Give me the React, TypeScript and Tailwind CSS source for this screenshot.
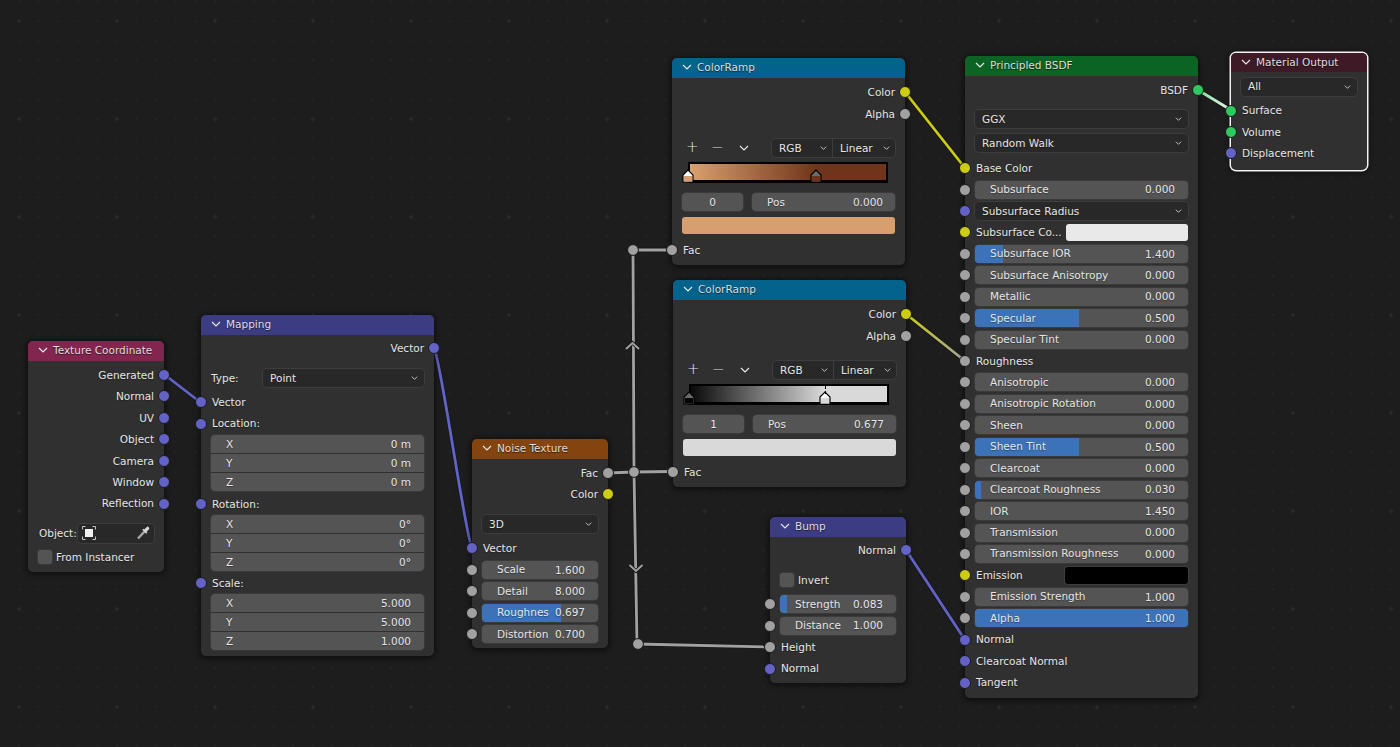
import type { ReactNode } from 'react';

type SocketKind = 'vector' | 'value' | 'color' | 'shader';

const socketColors: Record<SocketKind, string> = {
  vector: 'bg-[#6363c7]',
  value: 'bg-[#a1a1a1]',
  color: 'bg-[#cccc14]',
  shader: 'bg-[#2fc75f]',
};

function Socket({ kind, side }: { kind: SocketKind; side: 'left' | 'right' }) {
  return (
    <span
      className={
        'absolute top-1/2 z-10 h-[12px] w-[12px] -translate-y-1/2 rounded-full border border-[#1a1a1a] ' +
        socketColors[kind] +
        (side === 'left' ? ' -left-[6px]' : ' -right-[6px]')
      }
    />
  );
}

function Chevron({ className }: { className: string }) {
  return (
    <svg viewBox="0 0 10 6" className={className} fill="none" stroke="currentColor" strokeWidth="1.2">
      <path d="M1 1l4 4 4-4" />
    </svg>
  );
}

function Node({
  className,
  header,
  title,
  children,
}: {
  className: string;
  header: string;
  title: string;
  children: ReactNode;
}) {
  return (
    <div className={'absolute rounded-[5px] bg-[#303030] shadow-[0_1px_5px_2px_rgba(0,0,0,0.45)] ' + className}>
      <div className={'flex h-[19.5px] items-center rounded-t-[5px] pb-px pl-[10px] ' + header}>
        <Chevron className="h-[6px] w-[10px] text-[#e6e6e6]" />
        <span className="ml-[5px] text-[#dedede] [text-shadow:0_1px_1px_rgba(0,0,0,0.6)]">{title}</span>
      </div>
      {children}
    </div>
  );
}

function Row({ kind, side = 'left', children }: { kind?: SocketKind; side?: 'left' | 'right'; children: ReactNode }) {
  return (
    <div className="relative flex h-[21.45px] items-center px-[10px]">
      {kind && <Socket kind={kind} side={side} />}
      {children}
    </div>
  );
}

function Output({ label, kind }: { label: string; kind: SocketKind }) {
  return (
    <Row kind={kind} side="right">
      <span className="ml-auto">{label}</span>
    </Row>
  );
}

function Input({ label, kind }: { label: string; kind: SocketKind }) {
  return (
    <Row kind={kind}>
      <span className="ml-px">{label}</span>
    </Row>
  );
}

function Field({ label, value, fill = 0, kind }: { label: string; value: string; fill?: number; kind?: SocketKind }) {
  return (
    <Row kind={kind ?? 'value'}>
      <FieldBox label={label} value={value} fill={fill} />
    </Row>
  );
}

function FieldBox({ label, value, fill = 0 }: { label: string; value: string; fill?: number }) {
  return (
    <div className="relative flex h-[18px] w-full items-center justify-between overflow-hidden rounded-[4px] bg-[#545454] pl-[15px] pr-[13px] shadow-[0_0_0_1px_#3a3a3a]">
      {fill > 0 && <span className="absolute inset-y-0 left-0 bg-[#3b72b8]" style={{ width: `${fill}%` }} />}
      <span className="relative truncate leading-[15px]">{label}</span>
      <span className="relative ml-1 shrink-0">{value}</span>
    </div>
  );
}

function Select({ value }: { value: string }) {
  return (
    <div className="flex h-[18px] w-full items-center justify-between rounded-[4px] bg-[#282828] pl-[7px] pr-[6px] shadow-[0_0_0_1px_#3d3d3d]">
      <span>{value}</span>
      <Chevron className="h-[4px] w-[7px] text-[#e6e6e6]" />
    </div>
  );
}

function XYZ({ rows }: { rows: [string, string][] }) {
  return (
    <div className="mx-[10px] flex h-[56px] flex-col gap-px overflow-hidden rounded-[4px] shadow-[0_0_0_1px_#3a3a3a]">
      {rows.map(([axis, value]) => (
        <div key={axis} className="flex flex-1 items-center justify-between bg-[#545454] pl-[15px] pr-[13px]">
          <span>{axis}</span>
          <span>{value}</span>
        </div>
      ))}
    </div>
  );
}

function Handle({ fill, active }: { fill: string; active?: boolean }) {
  return (
    <svg viewBox="0 0 12 14" className="h-[14px] w-[12px]">
      <path d="M1 13V6l5-5 5 5v7z" fill={active ? '#ffffff' : '#6b6b6b'} stroke="#000" strokeWidth="1.2" />
      <rect x="2" y="7" width="8" height="5.4" fill={fill} />
    </svg>
  );
}

function ObjectIcon() {
  return (
    <svg viewBox="0 0 14 14" className="h-[14px] w-[14px]" fill="none">
      <path d="M.5 3.500v-3h3M10.500.5h3v3M13.500 10.500v3h-3M3.500 13.500h-3v-3" stroke="#c4c4c4" />
      <rect x="3" y="3" width="8" height="8" fill="#f0f0f0" />
    </svg>
  );
}

function Eyedropper() {
  return (
    <svg viewBox="0 0 14 14" className="h-[14px] w-[14px]" fill="none">
      <path d="M2 12.500L8.500 5.500" stroke="#a8a8a8" strokeWidth="2.400" />
      <path d="M6.800 3.200l4 4" stroke="#d4d4d4" strokeWidth="1.600" />
      <path d="M9.500 4.500l2.200-2.200" stroke="#d4d4d4" strokeWidth="3.200" strokeLinecap="round" />
    </svg>
  );
}

function Ramp({
  bar,
  swatch,
  index,
  pos,
  first,
  second,
  secondLeft,
  tick,
}: {
  bar: string;
  swatch: string;
  index: string;
  pos: string;
  first: ReactNode;
  second: ReactNode;
  secondLeft: string;
  tick?: boolean;
}) {
  return (
    <>
      <div className="h-[12.600px]" />
      <div className="flex h-[21.45px] items-center px-[10px]">
        <span className="ml-[4px] w-[25px] text-[15px] font-light leading-none">+</span>
        <span className="w-[25px] text-[15px] font-light leading-none">−</span>
        <Chevron className="ml-[3px] h-[6px] w-[10px] text-[#e6e6e6]" />
        <div className="ml-auto flex h-[18px] w-[123px] rounded-[4px] bg-[#282828] shadow-[0_0_0_1px_#3d3d3d]">
          <div className="flex w-[61px] items-center justify-between border-r border-[#3d3d3d] pl-[7px] pr-[5px]">
            <span>RGB</span>
            <Chevron className="h-[4px] w-[7px] text-[#e6e6e6]" />
          </div>
          <div className="flex flex-1 items-center justify-between pl-[7px] pr-[5px]">
            <span>Linear</span>
            <Chevron className="h-[4px] w-[7px] text-[#e6e6e6]" />
          </div>
        </div>
      </div>
      <div className="h-[3.300px]" />
      <div className={'relative ml-[16px] h-[21px] w-[200px] border-2 border-b-[3px] border-black ' + bar}>
        <span className="absolute -bottom-[3px] -left-[8px]">{first}</span>
        <span className={'absolute -bottom-[3px] ' + secondLeft}>{second}</span>
        {tick && <span className="absolute left-[134px] top-0 h-[8px] w-0 border-l border-dashed border-black" />}
      </div>
      <div className="h-[10px]" />
      <div className="mx-[10px] flex h-[18px] gap-[9px]">
        <div className="flex w-[61px] items-center justify-center rounded-[4px] bg-[#545454] shadow-[0_0_0_1px_#3a3a3a]">
          {index}
        </div>
        <div className="flex flex-1 items-center justify-between rounded-[4px] bg-[#545454] pl-[15px] pr-[12px] shadow-[0_0_0_1px_#3a3a3a]">
          <span>Pos</span>
          <span>{pos}</span>
        </div>
      </div>
      <div className="h-[6px]" />
      <div className={'mx-[10px] h-[17px] rounded-[3px] ' + swatch} />
      <div className="h-[5.500px]" />
    </>
  );
}

function Wires() {
  const wire = (d: string, stroke: string) => (
    <>
      <path d={d} fill="none" stroke="#161616" strokeWidth="4.400" />
      <path d={d} fill="none" stroke={stroke} strokeWidth="2.800" />
    </>
  );
  const reroute = (cx: number, cy: number) => (
    <circle cx={cx} cy={cy} r="5.400" fill="#a1a1a1" stroke="#1a1a1a" strokeWidth="1" />
  );
  return (
    <svg className="absolute inset-0 h-[747px] w-[1400px]" viewBox="0 0 1400 747">
      <defs>
        <linearGradient id="rough" gradientUnits="userSpaceOnUse" x1="906" y1="314" x2="965" y2="361">
          <stop offset="0" stopColor="#cccc14" />
          <stop offset="1" stopColor="#a1a1a1" />
        </linearGradient>
        <linearGradient id="surf" gradientUnits="userSpaceOnUse" x1="1198" y1="90" x2="1231" y2="110">
          <stop offset="0" stopColor="#7fe09c" />
          <stop offset="1" stopColor="#eef5ee" />
        </linearGradient>
      </defs>
      {wire('M165 375L200 402', '#6363c7')}
      {wire('M434 348C441 360 465 535 472 548', '#6363c7')}
      {wire('M608 473L634 472L672 471.5', '#a1a1a1')}
      {wire('M633 250L671 250', '#a1a1a1')}
      {wire('M634 472L633 250', '#a1a1a1')}
      {wire('M634 472L637 644', '#a1a1a1')}
      {wire('M637 644L769 647', '#a1a1a1')}
      {wire('M905 92L965 168', '#cccc14')}
      {wire('M906 314L965 361', 'url(#rough)')}
      {wire('M906 550L965 640', '#6363c7')}
      {wire('M1198 90L1231 110', 'url(#surf)')}
      <path d="M626 349l6.500-6 6.500 6" fill="none" stroke="#161616" strokeWidth="3.600" />
      <path d="M626 349l6.500-6 6.500 6" fill="none" stroke="#a1a1a1" strokeWidth="2" />
      <path d="M629.500 565l6.500 6 6.500-6" fill="none" stroke="#161616" strokeWidth="3.600" />
      <path d="M629.500 565l6.500 6 6.500-6" fill="none" stroke="#a1a1a1" strokeWidth="2" />
      {reroute(633, 250)}
      {reroute(634, 472)}
      {reroute(638, 644)}
    </svg>
  );
}

export default function App() {
  return (
    <div className="relative h-[747px] w-[1400px] overflow-hidden bg-[#1d1d1d] bg-[image:radial-gradient(circle,#282828_1.6px,transparent_1.8px),radial-gradient(circle,#242424_0.9px,transparent_1.1px)] bg-[size:98px_98px,19.6px_19.6px] bg-[position:68px_70px,9.2px_11.2px] font-['DejaVu_Sans',sans-serif] text-[10.5px] leading-none text-[#e6e6e6] [text-shadow:0_1px_1px_rgba(0,0,0,0.35)]">
      <Wires />

      <Node className="left-[28px] top-[341px] h-[231px] w-[136px]" header="bg-[#83264f]" title="Texture Coordinate">
        <div className="h-[3.800px]" />
        {['Generated', 'Normal', 'UV', 'Object', 'Camera', 'Window', 'Reflection'].map((name) => (
          <Output key={name} label={name} kind="vector" />
        ))}
        <div className="h-[8.500px]" />
        <div className="flex h-[21px] items-center pl-[11px] pr-[10px]">
          <span>Object:</span>
          <div className="ml-auto flex h-[19px] w-[76px] items-center justify-between rounded-[4px] bg-[#282828] px-[4px] shadow-[0_0_0_1px_#3d3d3d]">
            <ObjectIcon />
            <Eyedropper />
          </div>
        </div>
        <div className="mt-[1.500px] flex h-[24px] items-center pl-[10px]">
          <span className="h-[14px] w-[14px] rounded-[3px] bg-[#545454] shadow-[0_0_0_1px_#3a3a3a]" />
          <span className="ml-[4px]">From Instancer</span>
        </div>
      </Node>

      <Node className="left-[201px] top-[315px] h-[341px] w-[233px]" header="bg-[#3c3c83]" title="Mapping">
        <div className="h-[2.800px]" />
        <Output label="Vector" kind="vector" />
        <div className="h-[8.600px]" />
        <Row>
          <span>Type:</span>
          <div className="ml-auto w-[161px]">
            <Select value="Point" />
          </div>
        </Row>
        <div className="h-[2.700px]" />
        <Input label="Vector" kind="vector" />
        <Input label="Location:" kind="vector" />
        <div className="h-[1.100px]" />
        <XYZ rows={[['X', '0 m'], ['Y', '0 m'], ['Z', '0 m']]} />
        <div className="h-[2.300px]" />
        <Input label="Rotation:" kind="vector" />
        <div className="h-[0.300px]" />
        <XYZ rows={[['X', '0°'], ['Y', '0°'], ['Z', '0°']]} />
        <div className="h-[1.300px]" />
        <Input label="Scale:" kind="vector" />
        <div className="h-[0.300px]" />
        <XYZ rows={[['X', '5.000'], ['Y', '5.000'], ['Z', '1.000']]} />
      </Node>

      <Node className="left-[472px] top-[439px] h-[209px] w-[136px]" header="bg-[#83440f]" title="Noise Texture">
        <div className="h-[3.800px]" />
        <Output label="Fac" kind="value" />
        <Output label="Color" kind="color" />
        <div className="h-[8.600px]" />
        <Row>
          <Select value="3D" />
        </Row>
        <div className="h-[2.500px]" />
        <Input label="Vector" kind="vector" />
        <Field label="Scale" value="1.600" />
        <Field label="Detail" value="8.000" />
        <Field label="Roughnes" value="0.697" fill={68} />
        <Field label="Distortion" value="0.700" />
      </Node>

      <Node className="left-[672px] top-[58px] h-[207px] w-[233px]" header="bg-[#03638c]" title="ColorRamp">
        <div className="h-[4.200px]" />
        <Output label="Color" kind="color" />
        <Output label="Alpha" kind="value" />
        <Ramp
          bar="bg-[linear-gradient(to_right,#d9a06f,#6f3419_65%)]"
          swatch="bg-[#d79e6f]"
          index="0"
          pos="0.000"
          first={<Handle fill="#d79e6f" active />}
          second={<Handle fill="#6f3419" />}
          secondLeft="left-[120px]"
        />
        <Input label="Fac" kind="value" />
      </Node>

      <Node className="left-[673px] top-[280px] h-[207px] w-[233px]" header="bg-[#03638c]" title="ColorRamp">
        <div className="h-[4.200px]" />
        <Output label="Color" kind="color" />
        <Output label="Alpha" kind="value" />
        <Ramp
          bar="bg-[linear-gradient(to_right,#0a0a0a,#d9d9d9_68%)]"
          swatch="bg-[#d9d9d9]"
          index="1"
          pos="0.677"
          first={<Handle fill="#050505" />}
          second={<Handle fill="#d9d9d9" active />}
          secondLeft="left-[128px]"
          tick
        />
        <Input label="Fac" kind="value" />
      </Node>

      <Node className="left-[770px] top-[517px] h-[166px] w-[136px]" header="bg-[#3c3c83]" title="Bump">
        <div className="h-[2.800px]" />
        <Output label="Normal" kind="vector" />
        <div className="h-[8.600px]" />
        <Row>
          <span className="h-[14px] w-[14px] rounded-[3px] bg-[#545454] shadow-[0_0_0_1px_#3a3a3a]" />
          <span className="ml-[4px]">Invert</span>
        </Row>
        <div className="h-[2.800px]" />
        <Field label="Strength" value="0.083" fill={6} />
        <Field label="Distance" value="1.000" />
        <Input label="Height" kind="value" />
        <Input label="Normal" kind="vector" />
      </Node>

      <Node className="left-[965px] top-[56px] h-[642px] w-[233px]" header="bg-[#0b6424]" title="Principled BSDF">
        <div className="h-[3.800px]" />
        <Output label="BSDF" kind="shader" />
        <div className="h-[7.600px]" />
        <Row>
          <Select value="GGX" />
        </Row>
        <div className="h-[2.800px]" />
        <Row>
          <Select value="Random Walk" />
        </Row>
        <div className="h-[3.400px]" />
        <Input label="Base Color" kind="color" />
        <Field label="Subsurface" value="0.000" />
        <Row kind="vector">
          <Select value="Subsurface Radius" />
        </Row>
        <Row kind="color">
          <span className="ml-px">Subsurface Co...</span>
          <span className="ml-auto h-[17px] w-[122px] rounded-[3px] bg-[#e9e9e9]" />
        </Row>
        <Field label="Subsurface IOR" value="1.400" fill={13} />
        <Field label="Subsurface Anisotropy" value="0.000" />
        <Field label="Metallic" value="0.000" />
        <Field label="Specular" value="0.500" fill={49} />
        <Field label="Specular Tint" value="0.000" />
        <Input label="Roughness" kind="value" />
        <Field label="Anisotropic" value="0.000" />
        <Field label="Anisotropic Rotation" value="0.000" />
        <Field label="Sheen" value="0.000" />
        <Field label="Sheen Tint" value="0.500" fill={49} />
        <Field label="Clearcoat" value="0.000" />
        <Field label="Clearcoat Roughness" value="0.030" fill={3} />
        <Field label="IOR" value="1.450" />
        <Field label="Transmission" value="0.000" />
        <Field label="Transmission Roughness" value="0.000" />
        <Row kind="color">
          <span className="ml-px">Emission</span>
          <span className="ml-auto h-[17px] w-[123px] rounded-[3px] bg-black shadow-[0_0_0_1px_#3d3d3d]" />
        </Row>
        <Field label="Emission Strength" value="1.000" />
        <Field label="Alpha" value="1.000" fill={100} />
        <Input label="Normal" kind="vector" />
        <Input label="Clearcoat Normal" kind="vector" />
        <Input label="Tangent" kind="vector" />
      </Node>

      <Node
        className="left-[1231px] top-[52.500px] h-[117.500px] w-[136px] ring-[1.5px] ring-[#f2f2f2]"
        header="bg-[#3e1a26]"
        title="Material Output"
      >
        <div className="h-[3.800px]" />
        <Row>
          <Select value="All" />
        </Row>
        <div className="h-[2.600px]" />
        <Input label="Surface" kind="shader" />
        <Input label="Volume" kind="shader" />
        <Input label="Displacement" kind="vector" />
      </Node>
    </div>
  );
}
